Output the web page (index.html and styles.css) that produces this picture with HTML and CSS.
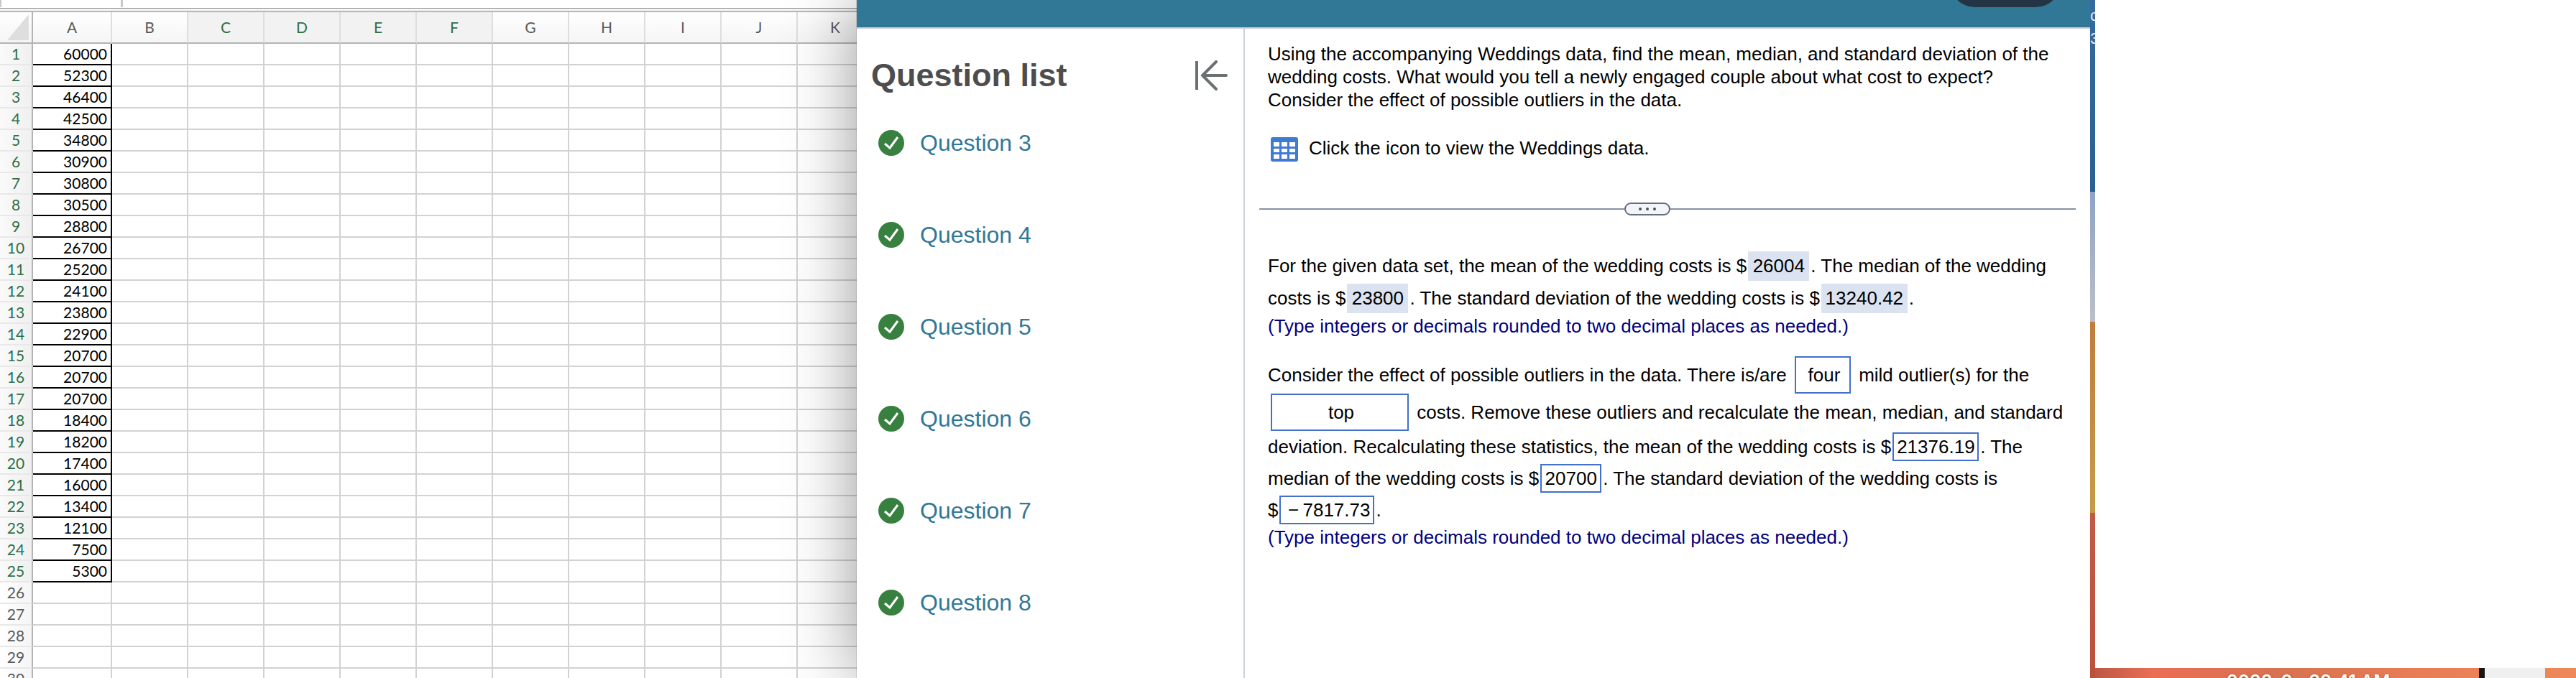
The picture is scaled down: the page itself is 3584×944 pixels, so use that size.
FILE: index.html
```html
<!DOCTYPE html>
<html lang="en">
<head>
    <meta charset="UTF-8">
    <meta name="viewport" content="width=device-width, initial-scale=1.0">
    <title>Question list</title>
    <link rel="stylesheet" href="styles.css">
</head>
<body>
    <div class="desktop">
        <section class="sheet">
            <div class="formula-bar">
                <div class="name-box"></div>
            </div>
            <div class="splitter"></div>
            <table class="grid">
                <colgroup>
                    <col class="col-index">
                    <col class="col-first">
                    <col span="10">
                </colgroup>
                <thead>
                    <tr>
                        <th class="corner">
                            <svg width="30" height="36" viewBox="0 0 30 36"><path d="M30 0v36H0z" fill="#dedede"/></svg>
                        </th>
                        <th>A</th>
                        <th>B</th>
                        <th class="selected">C</th>
                        <th class="selected">D</th>
                        <th class="selected">E</th>
                        <th class="selected">F</th>
                        <th>G</th>
                        <th>H</th>
                        <th>I</th>
                        <th>J</th>
                        <th>K</th>
                    </tr>
                </thead>
                <tbody id="grid-body"></tbody>
            </table>
        </section>

        <main class="app">
            <header class="app-header">
                <button class="header-button" type="button" aria-label="Menu"></button>
            </header>
            <div class="app-body">
                <nav class="sidebar">
                    <div class="sidebar-head">
                        <h1>Question list</h1>
                        <button class="collapse" type="button" aria-label="Collapse question list">
                            <svg width="46" height="42" viewBox="0 0 46 42" fill="none" stroke="#6b7071" stroke-width="4" stroke-linecap="round" stroke-linejoin="round">
                                <path d="M3 1v40" stroke-linecap="butt"/>
                                <path d="M30 2L11 21l19 19M11 21h33"/>
                            </svg>
                        </button>
                    </div>
                    <ul class="question-list">
                        <li><svg class="check" viewBox="0 0 36 36"><circle cx="18" cy="18" r="18"/><path d="M9 19l7 6L27 10"/></svg><a href="#q3">Question 3</a></li>
                        <li><svg class="check" viewBox="0 0 36 36"><circle cx="18" cy="18" r="18"/><path d="M9 19l7 6L27 10"/></svg><a href="#q4">Question 4</a></li>
                        <li><svg class="check" viewBox="0 0 36 36"><circle cx="18" cy="18" r="18"/><path d="M9 19l7 6L27 10"/></svg><a href="#q5">Question 5</a></li>
                        <li><svg class="check" viewBox="0 0 36 36"><circle cx="18" cy="18" r="18"/><path d="M9 19l7 6L27 10"/></svg><a href="#q6">Question 6</a></li>
                        <li><svg class="check" viewBox="0 0 36 36"><circle cx="18" cy="18" r="18"/><path d="M9 19l7 6L27 10"/></svg><a href="#q7">Question 7</a></li>
                        <li><svg class="check" viewBox="0 0 36 36"><circle cx="18" cy="18" r="18"/><path d="M9 19l7 6L27 10"/></svg><a href="#q8">Question 8</a></li>
                    </ul>
                </nav>

                <article class="question">
                    <p class="prompt">Using the accompanying Weddings data, find the mean, median, and standard deviation of the wedding costs. What would you tell a newly engaged couple about what cost to expect? Consider the effect of possible outliers in the data.</p>

                    <div class="data-link">
                        <button class="data-button" type="button" aria-label="View the Weddings data">
                            <svg width="38" height="36" viewBox="0 0 38 36">
                                <rect y="1" width="38" height="34" rx="3" fill="#3f7ad3"/>
                                <g fill="#fff">
                                    <rect x="4" y="8" width="8" height="6"/><rect x="15" y="8" width="8" height="6"/><rect x="26" y="8" width="8" height="6"/>
                                    <rect x="4" y="17" width="8" height="5"/><rect x="15" y="17" width="8" height="5"/><rect x="26" y="17" width="8" height="5"/>
                                    <rect x="4" y="25" width="8" height="6"/><rect x="15" y="25" width="8" height="6"/><rect x="26" y="25" width="8" height="6"/>
                                </g>
                            </svg>
                        </button>
                        <span>Click the icon to view the Weddings data.</span>
                    </div>

                    <div class="divider">
                        <button class="divider-handle" type="button" aria-label="Resize">
                            <svg width="24" height="6" viewBox="0 0 24 6" fill="#4d4f53"><circle cx="2" cy="3" r="2"/><circle cx="12" cy="3" r="2"/><circle cx="22" cy="3" r="2"/></svg>
                        </button>
                    </div>

                    <p class="part">For the given data set, the mean of the wedding costs is <span class="money">$<span class="answered">26004</span>.</span> The median of the wedding costs is <span class="money">$<span class="answered">23800</span>.</span> The standard deviation of the wedding costs is <span class="money">$<span class="answered wide">13240.42</span>.</span></p>
                    <p class="hint">(Type integers or decimals rounded to two decimal places as needed.)</p>

                    <p class="part">Consider the effect of possible outliers in the data. There is/are <input class="choice short" type="text" value="four" aria-label="Number of mild outliers"> mild outlier(s) for the <input class="choice" type="text" value="top" aria-label="Which costs"> costs. Remove these outliers and recalculate the mean, median, and standard deviation. Recalculating these statistics, the mean of the wedding costs is <span class="money">$<input class="answer wide" type="text" value="21376.19" aria-label="Mean">.</span> The median of the wedding costs is <span class="money">$<input class="answer" type="text" value="20700" aria-label="Median">.</span> The standard deviation of the wedding costs is <span class="money">$<input class="answer widest" type="text" value="−&thinsp;7817.73" aria-label="Standard deviation">.</span></p>
                    <p class="hint">(Type integers or decimals rounded to two decimal places as needed.)</p>
                </article>
            </div>
        </main>

        <aside class="side">
            <div class="wallpaper-edge">
                <span>c</span>
                <span>3</span>
            </div>
            <div class="blank-window"></div>
            <div class="wallpaper-bottom">
                <span class="file-label">2023-0…39.41 AM</span>
                <div class="thumbnail"></div>
            </div>
        </aside>
    </div>

    <script>
        const costs = [
            60000, 52300, 46400, 42500, 34800, 30900, 30800, 30500, 28800, 26700,
            25200, 24100, 23800, 22900, 20700, 20700, 20700, 18400, 18200, 17400,
            16000, 13400, 12100, 7500, 5300
        ];
        const rowCount = 30;
        const emptyColumns = 10;
        const body = document.getElementById('grid-body');

        for (let i = 0; i < rowCount; i++) {
            const row = body.insertRow();
            const index = document.createElement('th');
            index.textContent = i + 1;
            row.appendChild(index);

            const cell = row.insertCell();
            if (i < costs.length) {
                index.className = 'selected';
                cell.className = 'filled';
                cell.textContent = costs[i];
            }

            for (let j = 0; j < emptyColumns; j++) {
                row.insertCell();
            }
        }
    </script>
</body>
</html>
```
FILE: styles.css
```css
* {
    box-sizing: border-box;
}

body {
    margin: 0;
    font-family: "Liberation Sans", Arial, sans-serif;
    font-size: 26px;
    line-height: 32px;
    color: #000;
    background-color: #fff;
}

h1, p, ul {
    margin: 0;
    padding: 0;
}

button {
    padding: 0;
    border: none;
    background: none;
    cursor: pointer;
}

svg {
    display: block;
}

.desktop {
    display: grid;
    grid-template-columns: 1192fr 1716fr 676fr;
    height: 100vh;
    overflow: hidden;
}

/* Spreadsheet */

.sheet {
    min-width: 0;
    overflow: hidden;
    font-family: Lato, Carlito, sans-serif;
    font-size: 21px;
    line-height: 28px;
}

.formula-bar {
    height: 11px;
}

.name-box {
    width: 171px;
    height: 10px;
    border-left: 2px solid #c8c8c8;
    border-right: 3px solid #c8c8c8;
}

.splitter {
    height: 6px;
    border-top: 1px solid #989898;
    border-bottom: 1px solid #989898;
    background: linear-gradient(#dcdcdc, #fff 40%, #d0d0d0);
}

.grid {
    table-layout: fixed;
    width: 1216px;
    border-spacing: 0;
}

.grid col {
    width: 106px;
}

.grid .col-index {
    width: 46px;
}

.grid .col-first {
    width: 110px;
}

.grid th,
.grid td {
    height: 30px;
    padding: 0;
    border-right: 2px solid #d2d2d2;
    border-bottom: 2px solid #d2d2d2;
}

.grid th {
    font-weight: normal;
    color: #5a5a5a;
}

.grid thead th {
    height: 44px;
    border-bottom-color: #b4b4b4;
    border-right-color: #dedede;
    background: linear-gradient(#fff, #f5f5f5);
}

.grid thead .selected {
    background: #f2f2f2;
}

.grid .selected {
    color: #2f6f45;
}

.grid thead .corner {
    border-right-color: #b4b4b4;
}

.corner svg {
    margin-left: 10px;
}

.grid tbody th {
    border-right-color: #b4b4b4;
    border-bottom-color: #e8e8e8;
    background: linear-gradient(to right, #fff, #f5f5f5);
}

.grid tbody .selected {
    background: linear-gradient(to right, #fafafa, #f0f0f0);
}

.grid .filled {
    padding-right: 5px;
    text-align: right;
    border-color: #000;
}

/* Homework window */

.app {
    position: relative;
    display: flex;
    flex-direction: column;
    min-width: 0;
    background-color: #fff;
    box-shadow: 0 0 1px rgba(0, 0, 0, 0.6), 0 0 90px rgba(0, 0, 0, 0.42);
}

.app-header {
    display: flex;
    justify-content: flex-end;
    height: 40px;
    padding-right: 40px;
    overflow: hidden;
    border-bottom: 2px solid #cdd1df;
    background-color: #317896;
}

.header-button {
    width: 156px;
    height: 72px;
    margin-top: -62px;
    border-radius: 36px;
    background-color: #233444;
}

.app-body {
    display: flex;
    flex: 1;
}

.sidebar {
    flex: 0 0 540px;
    padding-top: 37px;
    border-right: 2px solid #cdd1df;
}

.sidebar-head {
    display: flex;
    align-items: center;
    justify-content: space-between;
    padding: 0 22px 2px 20px;
}

.sidebar-head h1 {
    font-size: 45px;
    line-height: 56px;
    color: #4d4d4d;
}

.question-list {
    list-style: none;
}

.question-list li {
    display: flex;
    align-items: center;
    gap: 22px;
    height: 128px;
    padding-left: 30px;
}

.question-list a {
    font-size: 32px;
    color: #317896;
    text-decoration: none;
}

.check {
    width: 36px;
    height: 36px;
    fill: #38803f;
}

.check path {
    fill: none;
    stroke: #fff;
    stroke-width: 3;
}

.question {
    flex: 1;
    padding: 19px 20px;
}

.prompt,
.part,
.hint,
.data-link {
    padding-left: 12px;
}

.prompt {
    padding-right: 24px;
}

.data-link {
    display: flex;
    gap: 15px;
    margin-top: 35px;
}

.data-button {
    margin-left: 4px;
}

.divider {
    display: flex;
    align-items: center;
    height: 18px;
    margin: 56px 0 48px;
}

.divider::before,
.divider::after {
    content: "";
    flex: 9;
    height: 2px;
    background-color: #8892a5;
}

.divider::after {
    flex: 10;
}

.divider-handle {
    display: flex;
    align-items: center;
    justify-content: center;
    width: 64px;
    height: 18px;
    border: 2px solid #626f7f;
    border-radius: 9px;
    background-color: #f3f5f8;
}

.hint {
    margin-bottom: 26px;
    color: #000080;
}

.money {
    white-space: nowrap;
}

.answered,
.answer,
.choice {
    display: inline-block;
    width: 85px;
    height: 40px;
    margin: 2px;
    padding: 0 4px;
    font: inherit;
    color: #000;
    text-align: center;
}

.answered {
    height: 41px;
    line-height: 41px;
    background-color: #dbe2f0;
}

.answer,
.choice {
    border: 2px solid #4270cb;
    border-radius: 0;
    background-color: #fff;
}

.wide {
    width: 120px;
}

.widest {
    width: 132px;
    text-align: right;
}

.choice {
    width: 192px;
    height: 52px;
    margin: 0 4px;
    padding: 0 0 0 4px;
}

.short {
    width: 78px;
}

/* Desktop behind the windows */

.side {
    position: relative;
    display: grid;
    grid-template-columns: 7px 1fr;
    grid-template-rows: 1fr 14px;
    min-width: 0;
    overflow: hidden;
}

.wallpaper-edge {
    display: flex;
    flex-direction: column;
    grid-row: 1 / 3;
    overflow: hidden;
    padding-top: 6px;
    font-size: 22px;
    color: #e4e8ec;
    background: linear-gradient(#336a9f 0, #2a5f95 267px, #8fa3c6 267px, #b9c0c8 448px, #c07d3c 448px, #c69c45 714px, #c25a45 714px, #bd4f3e 100%);
}

.blank-window {
    background-color: #fff;
}

.wallpaper-bottom {
    display: flex;
    justify-content: space-between;
    padding: 0 43px 0 183px;
    overflow: hidden;
    background: linear-gradient(to right, #bd5845, #ea6d54 80px, #d87250 260px, #e87d56 450px, #ee8859);
}

.file-label {
    padding-top: 3px;
    font-family: Inter, sans-serif;
    font-size: 25px;
    font-weight: 600;
    color: #fff;
    text-shadow: 0 1px 3px rgba(0, 0, 0, 0.5);
}

.thumbnail {
    width: 92px;
    border-left: 8px solid #151515;
    background-color: #f0f0f0;
}
```
